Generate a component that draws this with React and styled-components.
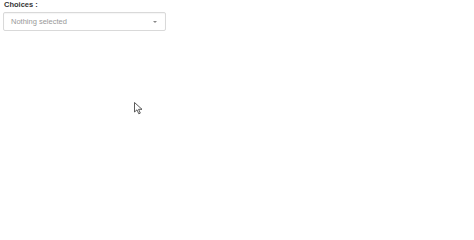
import React from "react"
import styled, { createGlobalStyle } from "styled-components"

const GlobalStyle = createGlobalStyle`
  html, body {
    margin: 0;
    padding: 0;
    background: #fff;
  }
  body {
    font-family: "Liberation Sans", Arial, sans-serif;
  }
`

const Page = styled.div`
  position: relative;
  width: 474px;
  height: 237px;
  padding: 0 3px;
  box-sizing: border-box;
`

const Label = styled.label`
  display: block;
  font-size: 7.5px;
  font-weight: bold;
  color: #333;
  line-height: 9px;
  margin: 0 0 3px 1px;
`

const Select = styled.div`
  width: 163px;
  height: 19px;
  box-sizing: border-box;
  border: 1px solid #d9d9d9;
  border-radius: 2px;
  display: flex;
  align-items: center;
  justify-content: space-between;
  padding: 0 8px 0 7px;
  box-shadow: inset 0 1px 1px rgba(0, 0, 0, 0.04);
`

const Placeholder = styled.span`
  font-size: 7.5px;
  line-height: 9px;
  color: #999;
`

const Caret = styled.span`
  width: 0;
  height: 0;
  border-left: 2px solid transparent;
  border-right: 2px solid transparent;
  border-top: 2px solid #888;
`

const Cursor = styled.svg`
  position: absolute;
  left: 134px;
  top: 102px;
`

const App = () => (
  <>
    <GlobalStyle />
    <Page>
      <Label>Choices :</Label>
      <Select>
        <Placeholder>Nothing selected</Placeholder>
        <Caret />
      </Select>
      <Cursor width="9" height="13" viewBox="0 0 9 13">
        <path d="M0.5 0.5 L0.5 10 L3 7.8 L4.8 11.8 L6.3 11.1 L4.6 7.3 L8 7.3 Z" fill="#fff" stroke="#333" strokeWidth="0.8" />
      </Cursor>
    </Page>
  </>
)

export default App
